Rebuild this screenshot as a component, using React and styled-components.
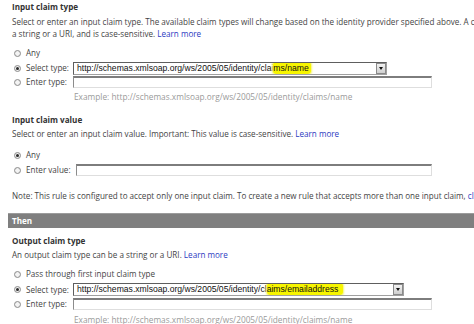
import React from 'react'
import styled, { createGlobalStyle } from 'styled-components';

const GlobalStyle = createGlobalStyle`
    body {
        margin : 0;
        background : #fff;
        overflow : hidden;
        font-family : "Open Sans", "Noto Sans", sans-serif;
        color : #444;
    }
`;

const Page = styled.div`
    width : 640px;
    padding-top : 1px;
    font-size : 8.1px;
    line-height : 12px;
    white-space : nowrap;
`;
const Section = styled.div`
    padding-left : 12px;
`;
const Heading = styled.div`
    font-weight : 700;
    color : #333;
    margin-top : ${p => p.top || 0}px;
`;
const Text = styled.div`
    margin-top : ${p => p.top || 0}px;
    color : ${p => p.muted ? '#9a9a9a' : '#444'};
    padding-left : ${p => p.indent || 0}px;
    font-size : ${p => p.muted ? '8.3px' : 'inherit'};
`;
const Link = styled.a`
    color : #2b3bbf;
    text-decoration : none;
    cursor : pointer;
`;
const Options = styled.div`
    display : flex;
    flex-direction : column;
    margin-top : ${p => p.top || 0}px;
`;
const Row = styled.div`
    display : flex;
    align-items : center;
    height : ${p => p.h}px;
    margin-top : ${p => p.top || 0}px;
`;
const Radio = styled.span`
    box-sizing : border-box;
    width : 7px;
    height : 7px;
    margin : 0 5px 0 2px;
    border-radius : 50%;
    border : 1px solid #8c8c8c;
    background : radial-gradient(circle, #f4f4f4 40%, #dcdcdc 100%);
    display : flex;
    align-items : center;
    justify-content : center;
    flex : none;
    &::after {
        content : '';
        width : 3px;
        height : 3px;
        border-radius : 50%;
        background : ${p => p.checked ? '#2a2a2a' : 'transparent'};
    }
`;
const Label = styled.span`
    display : inline-block;
    width : ${p => p.w ? p.w + 'px' : 'auto'};
    flex : none;
`;
const SelectBox = styled.div`
    box-sizing : border-box;
    width : ${p => p.w}px;
    height : 13px;
    border : 1px solid #6f6f6f;
    border-color : #5e5e5e #a0a0a0 #a0a0a0 #5e5e5e;
    display : flex;
    align-items : center;
    font-family : "Liberation Sans", Arial, sans-serif;
    font-size : 8.6px;
    color : #111;
    padding-left : 3px;
    background : #fff;
`;
const SelectText = styled.span`
    flex : 1;
    overflow : hidden;
    line-height : 11px;
`;
const Mark = styled.span`
    background : #f7f500;
    border-radius : 3px;
    padding : 1px ${p => p.pad || 2}px 1px 0;
    box-shadow : 0 0 2px 1px #f7f56a;
`;
const Arrow = styled.span`
    box-sizing : border-box;
    width : 10px;
    height : 11px;
    flex : none;
    border : 1px solid #8a8a8a;
    background : linear-gradient(#f2f2f2, #cfcfcf);
    display : flex;
    align-items : center;
    justify-content : center;
    &::after {
        content : '';
        border-left : 2.5px solid transparent;
        border-right : 2.5px solid transparent;
        border-top : 3px solid #111;
    }
`;
const InputBox = styled.div`
    box-sizing : border-box;
    width : ${p => p.w}px;
    height : 12px;
    border : 1px solid #dedede;
    border-top : 2px solid #7d7d7d;
    border-left : 1px solid #8c8c8c;
    background : #fff;
`;
const Bar = styled.div`
    margin : 11px 0 0 8px;
    height : 15px;
    background : #7f7f7f;
    border-top : 1px solid #9c9c9c;
    box-sizing : border-box;
    color : #fff;
    font-weight : 700;
    padding-left : 4px;
    line-height : 14px;
`;

function App() {
    return (
        <>
            <GlobalStyle />
            <Page>
                <Section>
                    <Heading>Input claim type</Heading>
                    <Text top={3}>
                        Select or enter an input claim type. The available claim types will change based on the identity provider specified above. A claim type can be<br/>
                        a string or a URI, and is case-sensitive. <Link>Learn more</Link>
                    </Text>
                    <Options top={7}>
                        <Row h={12}><Radio /><Label>Any</Label></Row>
                        <Row h={14} top={2}>
                            <Radio checked /><Label w={47}>Select type:</Label>
                            <SelectBox w={314}>
                                <SelectText>http://schemas.xmlsoap.org/ws/2005/05/identity/clai<Mark>ms/name</Mark></SelectText>
                                <Arrow />
                            </SelectBox>
                        </Row>
                        <Row h={12} top={1}>
                            <Radio /><Label w={47}>Enter type:</Label>
                            <InputBox w={359} />
                        </Row>
                        <Text muted indent={62} top={3}>Example: http://schemas.xmlsoap.org/ws/2005/05/identity/claims/name</Text>
                    </Options>

                    <Heading top={11}>Input claim value</Heading>
                    <Text top={2}>Select or enter an input claim value. Important: This value is case-sensitive. <Link>Learn more</Link></Text>
                    <Options top={9}>
                        <Row h={12}><Radio checked /><Label>Any</Label></Row>
                        <Row h={12} top={3}>
                            <Radio /><Label w={50}>Enter value:</Label>
                            <InputBox w={356} />
                        </Row>
                    </Options>
                    <Text top={14}>Note: This rule is configured to accept only one input claim. To create a new rule that accepts more than one input claim, <Link>click here</Link>.</Text>
                </Section>

                <Bar>Then</Bar>

                <Section>
                    <Heading top={7}>Output claim type</Heading>
                    <Text top={2}>An output claim type can be a string or a URI. <Link>Learn more</Link></Text>
                    <Options top={7}>
                        <Row h={12}><Radio /><Label>Pass through first input claim type</Label></Row>
                        <Row h={13} top={3}>
                            <Radio checked /><Label w={47}>Select type:</Label>
                            <SelectBox w={331}>
                                <SelectText>http://schemas.xmlsoap.org/ws/2005/05/identity/cl<Mark pad={5}>aims/emailaddress</Mark></SelectText>
                                <Arrow />
                            </SelectBox>
                        </Row>
                        <Row h={12} top={2}>
                            <Radio /><Label w={47}>Enter type:</Label>
                            <InputBox w={359} />
                        </Row>
                        <Text muted indent={62} top={4}>Example: http://schemas.xmlsoap.org/ws/2005/05/identity/claims/name</Text>
                    </Options>
                </Section>
            </Page>
        </>
    )
}

export default App
